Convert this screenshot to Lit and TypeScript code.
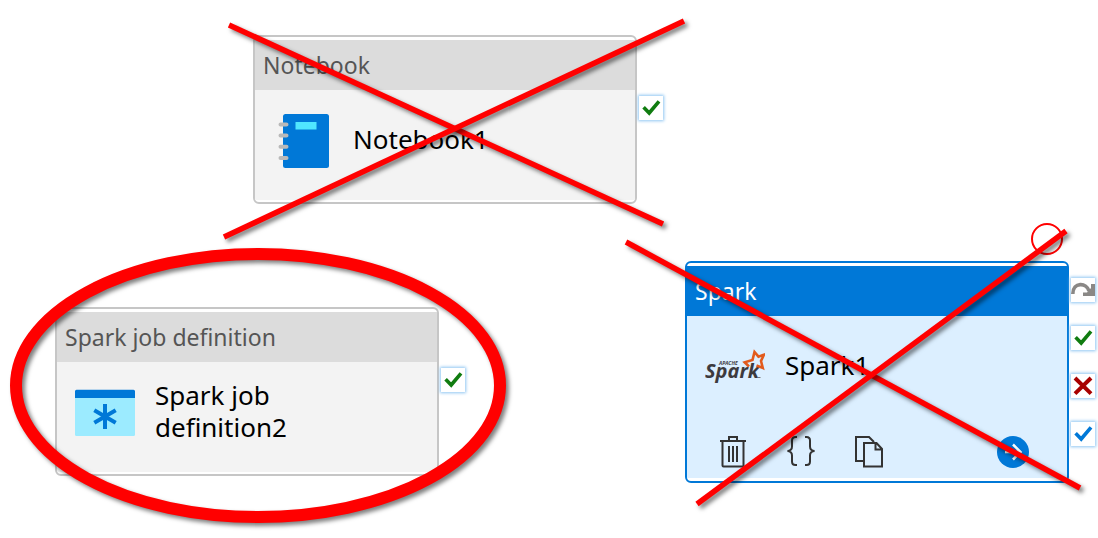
import { LitElement, html, svg, css, nothing } from "lit";
import { customElement, property } from "lit/decorators.js";
import { classMap } from "lit/directives/class-map.js";

type PortKind = "skip" | "success" | "failure" | "completion";

const portLabels: Record<PortKind, string> = {
  skip: "On skip",
  success: "On success",
  failure: "On failure",
  completion: "On completion",
};

const check = (color: string) =>
  svg`<path d="M4.600 11.300L10.200 17L20 5.300" fill="none" stroke=${color} stroke-width="3.6"/>`;

const portGlyphs: Record<PortKind, unknown> = {
  skip: svg`<path d="M1.800 16C1.800 3.500 16 4.500 18 13" fill="none" stroke="#8a8886" stroke-width="3.6"/>
    <path d="M24 6V18H12V14.500H16L20 10V6Z" fill="#8a8886"/>`,
  success: check("#107c10"),
  failure: svg`<path d="M4 4L20 19.600M20 4L4 19.600" fill="none" stroke="#a80000" stroke-width="4"/>`,
  completion: check("#0078d7"),
};

const icons = {
  notebook: svg`
    <rect x="10" y="5" width="46" height="54" rx="2.5" fill="#0078d7"/>
    <rect x="22.500" y="13" width="21" height="7.500" fill="#50e6ff"/>
    <path d="M7.500 15.500h6M7.500 26.500h6M7.500 37.800h6M7.500 49h6" stroke="#b9b9b9" stroke-width="4" stroke-linecap="round"/>`,
  job: svg`
    <path d="M0 15h60v38.500a1.500 1.500 0 0 1-1.500 1.500h-57A1.500 1.500 0 0 1 0 53.500z" fill="#9cebff"/>
    <path d="M1.500 8.700h57a1.500 1.500 0 0 1 1.500 1.500V17H0v-6.800a1.500 1.500 0 0 1 1.500-1.500z" fill="#0078d7"/>
    <path d="M30 23v25M19.300 29.300l21.400 12.400M40.700 29.300L19.300 41.700" stroke="#0078d7" stroke-width="4"/>`,
  spark: svg`
    <text class="logo"><tspan class="logo-small" x="14" y="30">APACHE</tspan><tspan x="0" y="43">Spark</tspan></text>
    <path d="M44 31.500L39.700 27.300L47.500 25L49.500 17L53.500 21.700L59 19.700L56 26L57.800 33L51.500 30.500" fill="none" stroke="#e25a1c" stroke-width="2.600"/>
    <path d="M53 42.500h2.500" stroke="#777" stroke-width="1"/>`,
};

@customElement("flow-port")
export class FlowPort extends LitElement {
  @property() kind: PortKind = "success";

  static styles = css`
    :host {
      display: block;
    }
    .port {
      display: block;
      width: 24px;
      height: 24px;
      padding: 0;
      border: 0;
      background: #fff;
      box-shadow: 0 0 3px 1px #8ec5f2;
      cursor: pointer;
    }
    .glyph {
      display: block;
    }
  `;

  render() {
    return html`<button class="port" aria-label=${portLabels[this.kind]}>
      <svg class="glyph" width="24" height="24" viewBox="0 0 24 24" aria-hidden="true">
        ${portGlyphs[this.kind]}
      </svg>
    </button>`;
  }
}

@customElement("flow-node")
export class FlowNode extends LitElement {
  @property() type = "";
  @property() name = "";
  @property() icon: keyof typeof icons = "notebook";
  @property({ type: Boolean }) selected = false;
  @property({ attribute: false }) ports: PortKind[] = ["success"];

  static styles = css`
    :host {
      display: block;
      font-family: "Segoe UI", "Noto Sans", "Open Sans", sans-serif;
    }
    .card {
      position: relative;
      box-sizing: border-box;
      width: 384px;
      padding: 3px 0 2px;
      border: 2px solid #c6c6c6;
      border-radius: 6px;
      background: #fff;
    }
    .head {
      padding: 0 8px;
      background: #dcdcdc;
      color: #555;
      font-size: 23px;
      line-height: 50px;
    }
    .body {
      padding-bottom: 12px;
      background: #f3f3f3;
    }
    .item {
      display: flex;
      align-items: center;
      gap: 20px;
      height: 98px;
      padding: 0 18px;
    }
    .name {
      max-width: 176px;
      color: #000;
      font-size: 26px;
      line-height: 32px;
    }
    .picture {
      flex: none;
    }
    .logo {
      font: italic 700 20px "Open Sans", sans-serif;
      fill: #3c3a3e;
    }
    .logo-small {
      font-size: 5px;
    }
    .selected {
      padding-bottom: 3px;
      border-color: #0078d7;
    }
    .selected .head {
      background: #0078d7;
      color: #fff;
    }
    .selected .body {
      padding-bottom: 8px;
      background: #dcefff;
    }
    .actions {
      display: flex;
      margin-top: 20px;
      padding: 0 20px 0 12px;
    }
    .action {
      display: grid;
      place-items: center;
      width: 68px;
      height: 36px;
      padding: 0;
      border: 0;
      background: none;
      color: #333;
      cursor: pointer;
    }
    .open {
      margin-left: auto;
    }
    .ports {
      position: absolute;
      top: 59px;
      left: 100%;
      display: grid;
      gap: 24px;
      padding-left: 4px;
    }
    .selected .ports {
      top: 15px;
    }
  `;

  private renderActions() {
    return html`<div class="actions">
      <button class="action" aria-label="Delete">
        <svg width="32" height="32" viewBox="0 0 32 32" fill="none" stroke="currentColor" stroke-width="2">
          <path d="M3 5h26M5.500 5v24.500a1 1 0 0 0 1 1h19a1 1 0 0 0 1-1V5M12 5v-4h8v4M12 10v16M16 10v16M20 10v16" />
        </svg>
      </button>
      <button class="action" aria-label="View code">
        <svg width="32" height="32" viewBox="0 0 32 32" fill="none" stroke="currentColor" stroke-width="2">
          <path d="M12 1h-1.500q-3.500 0-3.500 3.500v6q0 4-4.500 4.500Q7 15.500 7 19.500v6q0 3.500 3.500 3.500H12M20 1h1.500q3.500 0 3.500 3.500v6q0 4 4.500 4.500Q25 15.500 25 19.500v6q0 3.500-3.500 3.500H20" />
        </svg>
      </button>
      <button class="action" aria-label="Copy">
        <svg width="32" height="32" viewBox="0 0 32 32" fill="none" stroke="currentColor" stroke-width="2">
          <path d="M10.500 25H3V1h13l5 5M11 7h12.500l5.500 6v17.500H11zM22.500 7v6.500H29" />
        </svg>
      </button>
      <button class="action open" aria-label="Open">
        <svg width="32" height="32" viewBox="0 0 32 32" fill="none">
          <circle cx="16" cy="16" r="16" fill="#0078d7" />
          <path d="M8 16h15M16 8.500l7.500 7.500-7.500 7.500" stroke="#fff" stroke-width="2.500" />
        </svg>
      </button>
    </div>`;
  }

  render() {
    return html`<article class=${classMap({ card: true, selected: this.selected })}>
      <div class="head">${this.type}</div>
      <div class="body">
        <div class="item">
          <svg class="picture" width="60" height="60" viewBox="0 0 60 60" aria-hidden="true">
            ${icons[this.icon]}
          </svg>
          <div class="name">${this.name}</div>
        </div>
        ${this.selected ? this.renderActions() : nothing}
      </div>
      <div class="ports">
        ${this.ports.map((kind) => html`<flow-port .kind=${kind}></flow-port>`)}
      </div>
    </article>`;
  }
}

@customElement("app-root")
export class AppRoot extends LitElement {
  static styles = css`
    :host {
      display: block;
    }
    .canvas {
      position: relative;
      min-height: 100vh;
      overflow: hidden;
      background: #fff;
    }
    .node {
      position: absolute;
    }
    .notebook {
      top: 35px;
      left: 253px;
    }
    .job {
      top: 307px;
      left: 55px;
    }
    .spark {
      top: 261px;
      left: 685px;
    }
    .marks {
      position: absolute;
      inset: 0;
      width: 100%;
      height: 100%;
      fill: none;
      stroke: #f00;
      stroke-width: 5.5;
      pointer-events: none;
    }
    .mark {
      filter: drop-shadow(3px 3px 2px rgba(0, 0, 0, 0.5));
    }
    .ring {
      stroke-width: 12;
    }
    .handle {
      stroke-width: 2;
    }
  `;

  render() {
    return html`<main class="canvas">
      <flow-node class="node notebook" type="Notebook" name="Notebook1" icon="notebook"></flow-node>
      <flow-node class="node job" type="Spark job definition" name="Spark job definition2" icon="job"></flow-node>
      <flow-node
        class="node spark"
        type="Spark"
        name="Spark1"
        icon="spark"
        selected
        .ports=${["skip", "success", "failure", "completion"]}
      ></flow-node>
      <svg class="marks" aria-hidden="true">
        <path class="mark" d="M229 25L663 224" />
        <path class="mark" d="M224 237L684 21" />
        <ellipse class="mark ring" cx="258" cy="385.500" rx="242" ry="131.500" />
        <circle class="handle" cx="1047" cy="239" r="15" />
        <path class="mark" d="M626 242L1080 488" />
        <path class="mark" d="M697 504L1066 231" />
      </svg>
    </main>`;
  }
}
